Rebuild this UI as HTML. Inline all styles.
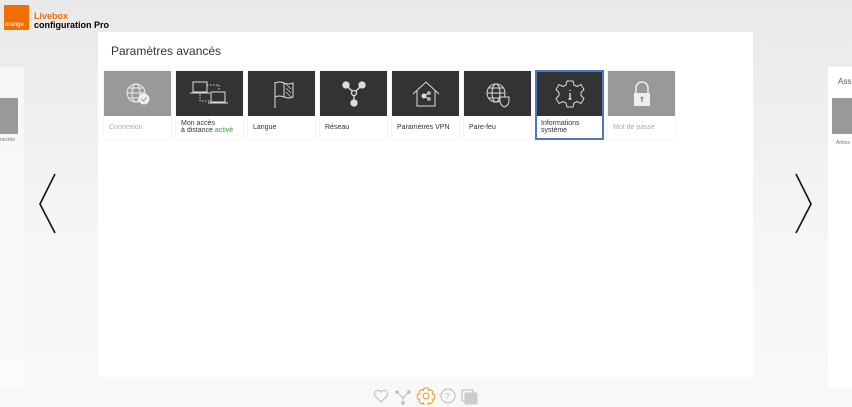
<!DOCTYPE html>
<html><head><meta charset="utf-8"><style>
*{margin:0;padding:0;box-sizing:border-box}
body{width:852px;height:407px;overflow:hidden;background:linear-gradient(#e9e9e9,#f6f6f6 60%,#f8f8f8);font-family:"Liberation Sans",sans-serif;position:relative}
.logo{position:absolute;left:4px;top:5px;width:25px;height:25px;background:#f16e00}
.logo span{position:absolute;left:1px;bottom:2px;font-size:6px;color:#fff}
.brand{position:absolute;left:34px;top:12px;font-size:9px;line-height:9px;font-weight:bold}
.brand .o{color:#f16e00}
.main{position:absolute;left:98px;top:32px;width:655px;height:345px;background:#fff}
h1{position:absolute;left:111px;top:44px;font-size:12px;font-weight:normal;color:#333}
.side{position:absolute;top:67px;width:24px;height:320px;background:linear-gradient(#f6f6f6,#fbfbfb)}
.tile{position:absolute;top:71px;width:67px;height:68px;background:#fff;box-shadow:0 0 2px rgba(0,0,0,.12)}
.tile .ic{height:45px;background:#333;display:flex;align-items:center;justify-content:center}
.tile .lb{font-size:7px;line-height:7px;color:#333;padding:8px 0 0 5px}
.tile.two .lb{padding-top:4px}
.tile.g .ic{background:#999}.tile.g .lb{color:#aaa}
.tile.sel{outline:2px solid #4a78c2;outline-offset:-1px}
.arrow{position:absolute;top:173px}
</style></head><body>
<div class="logo"><span>orange</span></div>
<div class="brand"><span class="o">Livebox</span><br>configuration Pro</div>
<div class="side" style="left:0"><div style="position:absolute;left:0;top:31px;width:18px;height:36px;background:#999"></div><div style="position:absolute;left:0;top:70px;font-size:5px;color:#777">nectée</div></div>
<div class="side" style="left:828px;background:#fff"><div style="position:absolute;left:10px;top:10px;font-size:8px;color:#555">Ass</div><div style="position:absolute;left:4px;top:31px;width:20px;height:36px;background:#999"></div><div style="position:absolute;left:8px;top:73px;font-size:5px;color:#777">Airbox</div></div>
<div class="main"></div>
<h1>Paramètres avancés</h1>
<svg class="arrow" style="left:38px" width="20" height="62"><path d="M17 1 L2 31 L17 60" fill="none" stroke="#111" stroke-width="1.6"/></svg>
<svg class="arrow" style="left:793px" width="20" height="62"><path d="M3 1 L18 31 L3 60" fill="none" stroke="#111" stroke-width="1.6"/></svg>

<div class="tile g" style="left:104px"><div class="ic"><svg width="30" height="30" fill="none" stroke="#eee" stroke-width="1"><circle cx="13" cy="14" r="9"/><ellipse cx="13" cy="14" rx="4" ry="9"/><path d="M4 14h18M6 9h14M6 19h14"/><circle cx="21" cy="20" r="5" fill="#eee"/><path d="M18.5 20l2 2 3-3.5" stroke="#999"/></svg></div><div class="lb">Connexion</div></div>
<div class="tile two" style="left:176px"><div class="ic"><svg width="50" height="32" fill="none" stroke="#ddd" stroke-width="1"><rect x="8" y="4" width="14" height="10"/><path d="M5 15h20"/><rect x="26" y="14" width="14" height="10"/><path d="M23 25h20"/><path d="M22 7h12v6M15 16v7h10" stroke-dasharray="1.5 1.5"/></svg></div><div class="lb">Mon accès<br>à distance <span style="color:#3a9c3a">activé</span></div></div>
<div class="tile" style="left:248px"><div class="ic"><svg width="30" height="32" fill="none" stroke="#ddd" stroke-width="1"><path d="M8 4v26M8 5q5-2 9 0t9 0v14q-4 2-9 0t-9 0"/><path d="M17 5v14" /><path d="M19 6l5 5M19 10l5 5M19 14l5 5" stroke-width=".7"/></svg></div><div class="lb">Langue</div></div>
<div class="tile" style="left:320px"><div class="ic"><svg width="30" height="32" fill="#ddd" stroke="#ddd" stroke-width="1.3"><path d="M7 7L15 15M23 7L15 15M15 15V25" fill="none"/><circle cx="7" cy="7" r="3"/><circle cx="23" cy="7" r="3"/><circle cx="15" cy="25" r="3"/><circle cx="15" cy="15" r="2.5" fill="#333"/></svg></div><div class="lb">Réseau</div></div>
<div class="tile" style="left:392px"><div class="ic"><svg width="32" height="32" fill="none" stroke="#ddd" stroke-width="1"><path d="M3 16L16 4 29 16M7 13v15h18V13"/><circle cx="14" cy="18" r="2" fill="#ddd"/><circle cx="19" cy="15" r="1.3"/><circle cx="19" cy="21" r="1.3"/><path d="M14 18l5-3M14 18l5 3"/></svg></div><div class="lb">Paramètres VPN</div></div>
<div class="tile" style="left:464px"><div class="ic"><svg width="30" height="30" fill="none" stroke="#ddd" stroke-width="1"><circle cx="13" cy="14" r="9"/><ellipse cx="13" cy="14" rx="4" ry="9"/><path d="M4 14h18M6 9h14M6 19h14"/><path d="M17 18h9v4q0 4-4.5 6q-4.5-2-4.5-6z" fill="#333"/></svg></div><div class="lb">Pare-feu</div></div>
<div class="tile sel two" style="left:536px"><div class="ic"><svg width="32" height="32" fill="none" stroke="#ddd" stroke-width="1"><path d="M13 3h6l1 4 3 1.5 4-2 3 5-3 3v3l3 3-3 5-4-2-3 1.5-1 4h-6l-1-4-3-1.5-4 2-3-5 3-3v-3l-3-3 3-5 4 2 3-1.5z"/><path d="M16 12v1M16 15v6M14.5 21h3" stroke-width="1.4"/></svg></div><div class="lb">Informations<br>système</div></div>
<div class="tile g" style="left:608px"><div class="ic"><svg width="30" height="32" fill="none" stroke="#eee" stroke-width="1.5"><path d="M9 15V10a6 6 0 0 1 12 0v5"/><rect x="7" y="15" width="16" height="13" fill="#eee" stroke="none"/><circle cx="15" cy="20" r="1.5" fill="#999" stroke="none"/><path d="M15 20v4" stroke="#999"/></svg></div><div class="lb">Mot de passe</div></div>

<svg style="position:absolute;left:372px;top:387px" width="110" height="18" fill="none" stroke="#bbb" stroke-width="1">
<path d="M9 15L3 9a3.2 3.2 0 0 1 6-4 3.2 3.2 0 0 1 6 4z"/>
<path d="M25 5l6 6 6-6M31 11v5"/><circle cx="25" cy="5" r="1.3" fill="#bbb"/><circle cx="37" cy="5" r="1.3" fill="#bbb"/><circle cx="31" cy="16" r="1.3" fill="#bbb"/>
<g stroke="#e0a030"><circle cx="54" cy="9" r="3"/><path d="M52 1h4l.7 2.5 2-1 2.5 2.5-1 2 2.5.7v4l-2.5.7 1 2-2.5 2.5-2-1-.7 2.5h-4l-.7-2.5-2 1-2.5-2.5 1-2-2.5-.7v-4l2.5-.7-1-2 2.5-2.5 2 1z"/></g>
<circle cx="76" cy="9" r="7"/><text x="73" y="12" font-size="8" fill="#bbb" stroke="none" font-family="Liberation Sans">?</text>
<rect x="90" y="3" width="11" height="11"/><rect x="93" y="6" width="12" height="11" fill="#ccc" stroke="#ccc"/>
</svg>
</body></html>
